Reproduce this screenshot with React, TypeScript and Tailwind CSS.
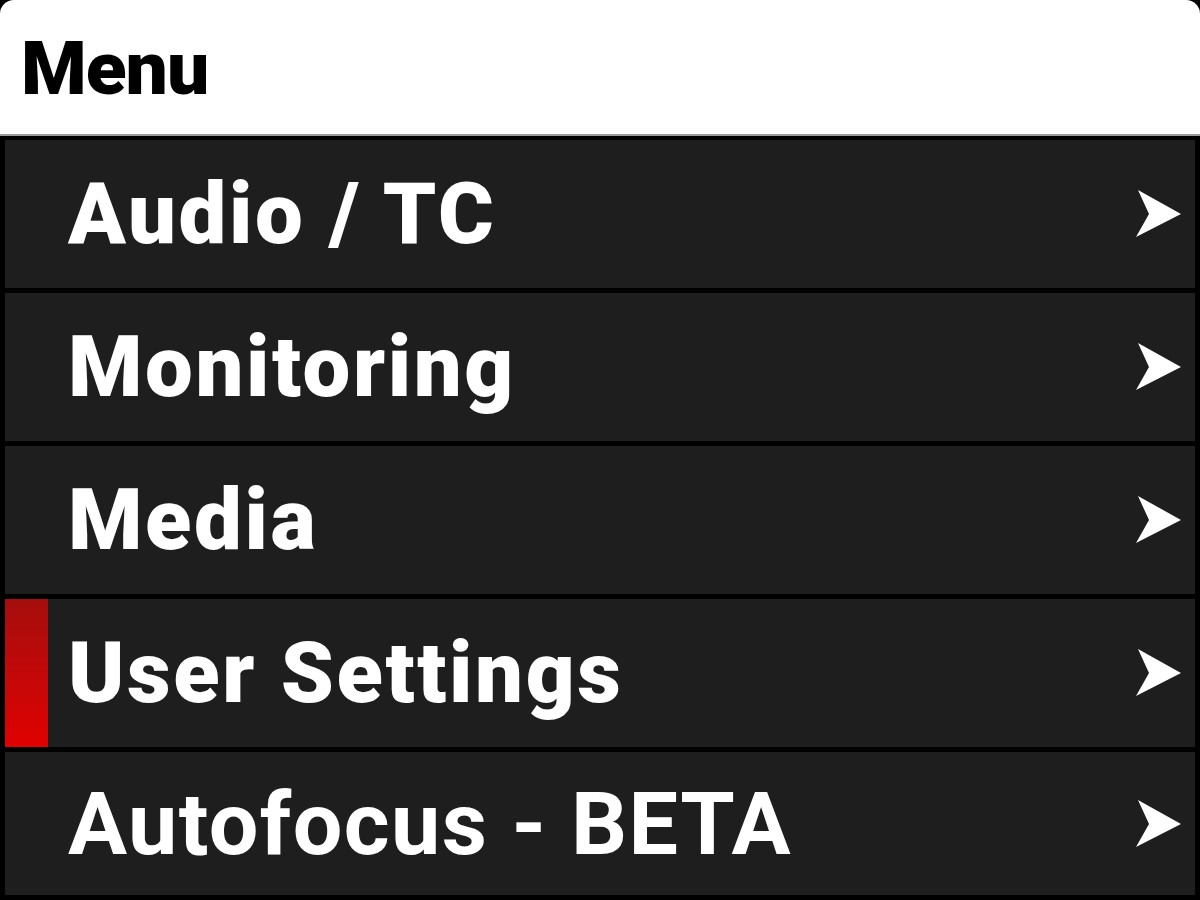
import React from "react";

const Chevron = () => (
  <svg width="48" height="50" viewBox="0 0 48 50" className="shrink-0">
    <polygon points="3,1 46,25 1,48 14,25" fill="#ffffff" />
  </svg>
);

const items = [
  { label: "Audio / TC", active: false },
  { label: "Monitoring", active: false },
  { label: "Media", active: false },
  { label: "User Settings", active: true },
];

export default function App() {
  return (
    <div
      className="w-[1200px] h-[900px] bg-black flex flex-col overflow-hidden"
      style={{ fontFamily: "Roboto, 'Liberation Sans', sans-serif" }}
    >
      <div className="h-[134px] bg-white rounded-t-[14px] flex items-center pl-[21px] shrink-0">
        <span className="text-[75px] font-black text-black leading-none tracking-[-1px] mt-[2px]">Menu</span>
      </div>
      <div className="h-[2px] bg-[#9a9a9a] shrink-0" />
      <div className="flex flex-col gap-[5px] pl-[5px] pr-[5px] pt-[4px] pb-[5px] flex-1">
        {items.map((it) => (
          <div key={it.label} className="h-[148px] bg-[#1e1e1e] flex items-center shrink-0">
            <div className={`w-[43px] self-stretch ${it.active ? "bg-gradient-to-b from-[#a50d0d] to-[#e00000]" : ""}`} />
            <span className="ml-[20px] text-[85px] font-black text-white leading-none flex-1 tracking-[2.6px]">{it.label}</span>
            <div className="mr-[12px]">
              <Chevron />
            </div>
          </div>
        ))}
        <div className="flex-1 bg-[#1e1e1e] flex items-center relative">
          <span className="ml-[63px] text-[88px] font-bold text-white leading-none flex-1 tracking-[1.4px]">Autofocus - BETA</span>
          <div className="mr-[12px]">
            <Chevron />
          </div>
        </div>
      </div>
    </div>
  );
}
